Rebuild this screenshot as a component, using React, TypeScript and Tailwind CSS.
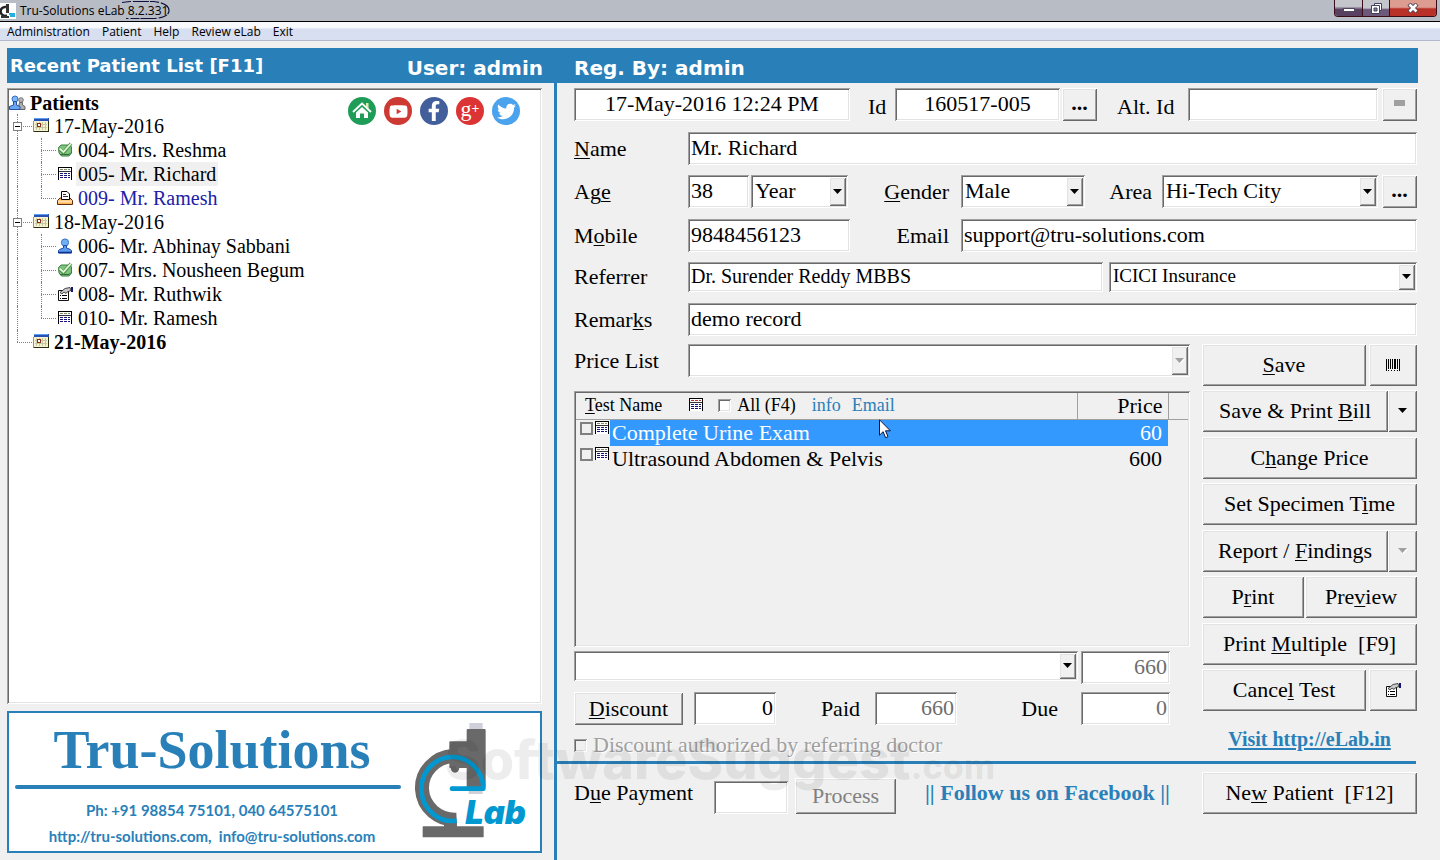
// ============================================
// eLab — Patient registration screen
// ============================================

import React from "react";
import clsx from "clsx";
import { FaFacebookF, FaTwitter, FaYoutube } from "react-icons/fa";

const SUNKEN =
  "shadow-[inset_1px_1px_0_#a0a0a0,inset_-1px_-1px_0_#ffffff,inset_2px_2px_0_#696969,inset_-2px_-2px_0_#e3e3e3]";
const RAISED =
  "shadow-[inset_1px_1px_0_#ffffff,inset_-1px_-1px_0_#696969,inset_2px_2px_0_#e3e3e3,inset_-2px_-2px_0_#a0a0a0]";

// Underlines the letter that follows "_"
function Mnemonic({ text }: { text: string }) {
  const at = text.indexOf("_");
  if (at < 0) return <>{text}</>;
  return (
    <span className="whitespace-pre">
      {text.slice(0, at)}
      <span className="underline decoration-1 underline-offset-2">{text[at + 1]}</span>
      {text.slice(at + 2)}
    </span>
  );
}

/* ---------- Icons ---------- */

function CalendarIcon() {
  return (
    <svg width="16" height="16" viewBox="0 0 16 16" shapeRendering="crispEdges">
      <rect x="0" y="2" width="15" height="12" fill="#f4f2d0" />
      <path d="M0 3h1v11h-1z" fill="#9a9a5a" />
      <rect x="1" y="0" width="15" height="3" fill="#2a50b8" />
      <rect x="1" y="0" width="14" height="1" fill="#5aa0e8" />
      <path d="M3 4h1v8H3zM6 4h1v8H6zM9 4h1v8H9zM12 4h1v8h-1zM2 6h12v1H2zM2 9h12v1H2z" fill="#c9c9a0" />
      <path d="M4 5h4v4H4z" fill="#8c2a1c" />
      <path d="M5 6h2v2H5z" fill="#fff" />
      <path d="M0 13h15v1H0z" fill="#8d9048" />
      <path d="M1 14h15V3h-1v10H1z" fill="#2c3010" />
    </svg>
  );
}

function CheckIcon() {
  return (
    <svg width="16" height="16" viewBox="0 0 16 16">
      <path d="M1.500 5.500 4 3h9l1.500 2v6L12 14H4.500L2 11z" fill="#7cc47c" stroke="#3d7f45" />
      <path d="M3 12.500h9l2-2" stroke="#2f6a38" fill="none" />
      <path d="m2 6.500 4.500 4L14 1.500" fill="none" stroke="#4c8f4c" strokeWidth="3.400" />
      <path d="m2.500 6.500 4 3.500L14 1.500" fill="none" stroke="#e4f8d8" strokeWidth="1.800" />
    </svg>
  );
}

function SheetIcon({ accent = "#7b8a6a" }: { accent?: string }) {
  return (
    <svg width="16" height="16" viewBox="0 0 16 16" shapeRendering="crispEdges">
      <rect x="1" y="1" width="14" height="13" fill="#fff" />
      <path d="M1 1h14v1H1zM1 1h1v13H1zM14 1h1v13h-1z" fill="#000" />
      <path d="M3 3h3v1H3zM7 3h3v1H7zM11 3h2v1h-2z" fill={accent} />
      <path d="M2 5h12v1H2z" fill="#333" />
      <path
        d="M3 7h3v1H3zM7 7h3v1H7zM11 7h2v1h-2zM3 9h3v1H3zM7 9h3v1H7zM11 9h2v1h-2zM3 11h3v1H3zM7 11h3v1H7zM11 11h2v1h-2z"
        fill="#14147a"
      />
    </svg>
  );
}

function PrinterIcon() {
  return (
    <svg width="16" height="16" viewBox="0 0 16 16">
      <path d="M.5 10.500 3 8h10l2.500 2.500v4H.5z" fill="#ffb65c" stroke="#5c2c10" />
      <path d="M1 10.500h14v2H1z" fill="#ffe0ae" />
      <path d="M4.500 9.500v-8H10l2.500 2.500v5.500z" fill="#fff" stroke="#000" />
      <path d="M6 4.500h3M6 6.500h5" stroke="#333" />
    </svg>
  );
}

function PersonIcon() {
  return (
    <svg width="16" height="16" viewBox="0 0 16 16">
      <circle cx="8" cy="4.500" r="3.600" fill="#6fb0f4" stroke="#3a6fc0" />
      <path d="M6.500 7.500h3V10l4 1.500 1 1v2.500h-13v-2.500l1-1 4-1.500z" fill="#5c9cec" stroke="#1c48a8" />
      <path d="M1.500 14.500h13" stroke="#0f2f90" strokeWidth="1.500" />
    </svg>
  );
}

function PeopleIcon() {
  return (
    <svg width="17" height="16" viewBox="0 0 17 16">
      <circle cx="12" cy="5" r="2.300" fill="#b8b8b8" stroke="#777" />
      <path d="M10.500 7.500h3v2.500l2.500 1.500v3H9z" fill="#b0b0b0" stroke="#666" />
      <circle cx="6" cy="4" r="3" fill="#7db8f4" stroke="#3a6fc0" />
      <path d="M4.500 6.500h3V10l3.500 1.500v3H.5v-3L4.500 10z" fill="#6aa6ee" stroke="#2450a8" />
    </svg>
  );
}

function PropertiesIcon() {
  return (
    <svg width="17" height="16" viewBox="0 0 17 16">
      <path d="M1.500 4.500h10v10h-10z" fill="#fff" stroke="#111" />
      <path d="M3 9.500h1M5 9.500h5M3 12.500h1M5 12.500h5" stroke="#000" />
      <path d="m3 6.500 5-4 5-1 1 3-4 1.500-1 1.500-2-1.500-2 2z" fill="#c8c8c8" stroke="#222" strokeWidth=".8" />
      <path d="M14 1h2v5h-2z" fill="#14147a" />
    </svg>
  );
}

function BarcodeIcon() {
  return (
    <svg width="14" height="12" viewBox="0 0 14 12" shapeRendering="crispEdges">
      <path
        d="M0 0h1v12H0zM2 0h1v10H2zM4 0h1v10H4zM6 0h1v10H6zM8 0h2v10H8zM11 0h1v10h-1zM13 0h1v12h-1zM2 11h1v1H2zM5 11h1v1H5zM8 11h1v1H8zM11 11h1v1h-1z"
        fill="#000"
      />
    </svg>
  );
}

function Arrow({ disabled }: { disabled?: boolean }) {
  return (
    <svg width="10" height="6" viewBox="0 0 10 6">
      {disabled && <path d="M1 1h9L5.500 6z" fill="#fff" />}
      <path d="M0 0h9L4.500 5z" fill={disabled ? "#a0a0a0" : "#000"} />
    </svg>
  );
}

function HouseIcon() {
  return (
    <svg width="22" height="22" viewBox="0 0 22 22">
      <path d="M15 3h2.500v6L15 6.500z" fill="#d8f0a8" />
      <path d="m2 12 9-8.500 9 8.500" fill="none" stroke="#fff" strokeWidth="1.800" />
      <path d="M5 12.500 11 7l6 5.500V18h-4v-4.500H9V18H5z" fill="#fff" />
    </svg>
  );
}

function MicroscopeLogo() {
  return (
    <svg width="114" height="116" viewBox="40 68 342 348" className="shrink-0">
      <rect x="206" y="71" width="40" height="24" fill="#d0d0da" />
      <rect x="204" y="262" width="42" height="22" fill="#d0d0da" />
      <rect x="198" y="89" width="57" height="176" rx="3" fill="#696969" />
      <rect x="146" y="126" width="60" height="80" rx="3" fill="#696969" />
      <path d="M148 200h34l-6 6q-2 14-13 14t-13-14z" fill="#696969" />
      <path d="M158 170A99 95.500 0 0 0 168 361" fill="none" stroke="#696969" strokeWidth="42" />
      <path d="M130 370h38v14h-38z" fill="#696969" />
      <rect x="66" y="381" width="183" height="33" rx="2" fill="#696969" />
      <path d="M154 268H248A93 96 0 1 0 168 364" fill="none" stroke="#0098d0" strokeWidth="14" strokeLinejoin="round" />
      <circle cx="154" cy="268" r="7" fill="#0098d0" />
      <text x="194" y="373" fontFamily="Inter, sans-serif" fontWeight="900" fontStyle="italic" fontSize="98" fill="#0098d0">
        Lab
      </text>
    </svg>
  );
}

/* ---------- Controls ---------- */

interface FieldProps {
  id: string;
  value?: string;
  className?: string;
  disabled?: boolean;
  label?: string;
}

function TextField({ id, value = "", className, disabled, label }: FieldProps) {
  return (
    <input
      id={id}
      type="text"
      defaultValue={value}
      disabled={disabled}
      aria-label={label}
      className={clsx("min-w-0 bg-white px-[3px] pb-0.5 outline-none", SUNKEN, disabled && "text-[#6d6d6d]", className)}
    />
  );
}

interface SelectFieldProps extends FieldProps {
  options: string[];
}

function SelectField({ id, options, className, disabled, label }: SelectFieldProps) {
  return (
    <div className={clsx("relative flex min-w-0 bg-white", SUNKEN, className)}>
      <select
        id={id}
        disabled={disabled}
        aria-label={label}
        className="w-full appearance-none bg-transparent pb-0.5 pl-1 pr-5 text-black outline-none"
      >
        {options.map((option) => (
          <option key={option}>{option}</option>
        ))}
      </select>
      <span
        className={clsx(
          "pointer-events-none absolute inset-y-0.5 right-0.5 flex w-[17px] items-center justify-center bg-[#f0f0f0]",
          RAISED
        )}
      >
        <Arrow disabled={disabled} />
      </span>
    </div>
  );
}

interface PushButtonProps {
  text?: string;
  label?: string;
  className?: string;
  disabled?: boolean;
  children?: React.ReactNode;
}

function PushButton({ text, label, className, disabled, children }: PushButtonProps) {
  return (
    <button
      type="button"
      disabled={disabled}
      aria-label={label}
      className={clsx(
        "flex items-center justify-center bg-[#f0f0f0]",
        RAISED,
        disabled && "text-[#808080]",
        className
      )}
    >
      {text ? <Mnemonic text={text} /> : children}
    </button>
  );
}

function Label({ htmlFor, text, className }: { htmlFor: string; text: string; className?: string }) {
  return (
    <label htmlFor={htmlFor} className={clsx("shrink-0 whitespace-nowrap", className)}>
      <Mnemonic text={text} />
    </label>
  );
}

/* ---------- Patient tree ---------- */

type Guide = "line" | "branch" | "last" | "node";

interface TreeRow {
  guides: Guide[];
  icon: React.ReactNode;
  text: string;
  className?: string;
}

const treeRows: TreeRow[] = [
  { guides: ["node"], icon: <CalendarIcon />, text: "17-May-2016" },
  { guides: ["line", "branch"], icon: <CheckIcon />, text: "004- Mrs. Reshma" },
  { guides: ["line", "branch"], icon: <SheetIcon />, text: "005- Mr. Richard", className: "bg-[#f0f0f0]" },
  { guides: ["line", "last"], icon: <PrinterIcon />, text: "009- Mr. Ramesh", className: "text-[#2020a8]" },
  { guides: ["node"], icon: <CalendarIcon />, text: "18-May-2016" },
  { guides: ["line", "branch"], icon: <PersonIcon />, text: "006- Mr. Abhinay Sabbani" },
  { guides: ["line", "branch"], icon: <CheckIcon />, text: "007- Mrs. Nousheen Begum" },
  { guides: ["line", "branch"], icon: <PropertiesIcon />, text: "008- Mr. Ruthwik" },
  { guides: ["line", "last"], icon: <SheetIcon />, text: "010- Mr. Ramesh" },
  { guides: ["last"], icon: <CalendarIcon />, text: "21-May-2016", className: "font-bold" },
];

function TreeGuide({ kind }: { kind: Guide }) {
  return (
    <span className="relative h-6 w-6 shrink-0">
      <span
        className={clsx(
          "absolute left-2 top-0 border-l border-dotted border-[#808080]",
          kind === "last" ? "h-3" : "h-6"
        )}
      />
      {kind !== "line" && (
        <span className="absolute left-2 top-3 w-[15px] border-t border-dotted border-[#808080]" />
      )}
      {kind === "node" && (
        <span className="absolute left-1 top-2 flex h-[9px] w-[9px] items-center justify-center border border-[#808080] bg-white">
          <span className="h-px w-[5px] bg-black" />
        </span>
      )}
    </span>
  );
}

function PatientTree() {
  return (
    <div className="pt-px text-[20px] leading-6">
      <div className="flex h-[23px] items-center gap-1 font-bold">
        <PeopleIcon />
        Patients
      </div>
      <ul>
        {treeRows.map((row) => (
          <li key={row.text} className="flex h-6 items-center">
            {row.guides.map((kind, i) => (
              <TreeGuide key={i} kind={kind} />
            ))}
            <span className="flex w-[19px] shrink-0">{row.icon}</span>
            <span className={clsx("whitespace-nowrap px-0.5", row.className)}>{row.text}</span>
          </li>
        ))}
      </ul>
    </div>
  );
}

const socialLinks = [
  { name: "Home", color: "bg-[#1f9d58]", icon: <HouseIcon /> },
  { name: "YouTube", color: "bg-[#cc3a33]", icon: <FaYoutube size={19} /> },
  { name: "Facebook", color: "bg-[#425f9c]", icon: <FaFacebookF size={20} /> },
  {
    name: "Google Plus",
    color: "bg-[#dc3434]",
    icon: (
      <span className="flex items-center pb-1">
        g<span className="text-[14px] font-bold">+</span>
      </span>
    ),
  },
  { name: "Twitter", color: "bg-[#4aa3ec]", icon: <FaTwitter size={19} /> },
];

function BrandPanel() {
  return (
    <div className="mt-[7px] flex items-start justify-between border-2 border-[#2980b9] bg-white pb-0.5 pl-1.5 pr-3 pt-[9px] text-[#2980b9]">
      <div className="flex w-[386px] flex-col items-center">
        <div className="pl-2 text-[54px] font-bold leading-[56px]">Tru-Solutions</div>
        <div className="mt-[7px] h-1 w-full rounded-full bg-[#2980b9]" />
        <div className="mt-2 whitespace-pre pl-2 text-center text-[15px] font-bold leading-[26px] [font-family:Lato,sans-serif]">
          <div>Ph: +91 98854 75101, 040 64575101</div>
          <div>http://tru-solutions.com,  info@tru-solutions.com</div>
        </div>
      </div>
      <MicroscopeLogo />
    </div>
  );
}

/* ---------- Registration form ---------- */

function PatientFields() {
  return (
    <div className="flex flex-col gap-2.5">
      <div className="flex flex-col gap-[11px]">
        <div className="flex h-[33px] items-center">
          <TextField id="regDate" label="Date" value="17-May-2016 12:24 PM" className="h-full w-[276px] text-center" />
          <Label htmlFor="regId" text="Id" className="w-[45px] pl-[18px] pt-1" />
          <TextField id="regId" value="160517-005" className="h-full w-[165px] text-center" />
          <PushButton label="Find id" className="ml-0.5 h-full w-[35px] pb-1 font-bold">
            ...
          </PushButton>
          <Label htmlFor="altId" text="Alt. Id" className="w-[91px] pl-5 pt-1" />
          <TextField id="altId" className="h-full flex-1" />
          <PushButton label="Clear alternate id" disabled className="ml-1 h-full w-[35px] pb-1">
            <span className="h-1.5 w-[11px] bg-[#a0a0a0]" />
          </PushButton>
        </div>

        <div className="flex h-[33px] items-center">
          <Label htmlFor="name" text="_Name" className="w-[114px]" />
          <TextField id="name" value="Mr. Richard" className="h-full flex-1" />
        </div>
      </div>

      <div className="flex flex-col gap-[11px]">
        <div className="flex h-[33px] items-center">
          <Label htmlFor="age" text="Ag_e" className="w-[114px]" />
          <TextField id="age" value="38" className="h-full w-[61px]" />
          <SelectField id="ageUnit" label="Age unit" options={["Year", "Month", "Day"]} className="ml-0.5 h-full w-[97px]" />
          <Label htmlFor="gender" text="_Gender" className="w-[113px] pr-3 text-right" />
          <SelectField id="gender" options={["Male", "Female"]} className="h-full w-[124px]" />
          <Label htmlFor="area" text="Area" className="w-[77px] pr-2.5 text-right" />
          <SelectField id="area" options={["Hi-Tech City"]} className="h-full flex-1" />
          <PushButton label="Find area" className="ml-1 h-full w-[35px] pb-1 font-bold">
            ...
          </PushButton>
        </div>

        <div className="flex h-[33px] items-center">
          <Label htmlFor="mobile" text="M_obile" className="w-[114px]" />
          <TextField id="mobile" value="9848456123" className="h-full w-[162px]" />
          <Label htmlFor="email" text="Email" className="w-[111px] pr-3 text-right" />
          <TextField id="email" value="support@tru-solutions.com" className="h-full flex-1" />
        </div>
      </div>

      <div className="flex flex-col gap-[11px]">
        <div className="flex h-[30px] items-center">
          <Label htmlFor="referrer" text="Referrer" className="w-[114px]" />
          <TextField id="referrer" value="Dr. Surender Reddy MBBS" className="h-full flex-1 text-[20px]" />
          <SelectField
            id="insurance"
            label="Insurance"
            options={["ICICI Insurance"]}
            className="ml-1.5 h-full w-[308px] text-[19px]"
          />
        </div>

        <div className="flex h-[33px] items-center">
          <Label htmlFor="remarks" text="Remar_ks" className="w-[114px]" />
          <TextField id="remarks" value="demo record" className="h-full flex-1" />
        </div>
      </div>
    </div>
  );
}

const tests = [
  { name: "Complete Urine Exam", price: 60, selected: true },
  { name: "Ultrasound Abdomen & Pelvis", price: 600, selected: false },
];

function TestTable() {
  return (
    <div className={clsx("relative mt-3.5 h-[256px] p-0.5", SUNKEN)}>
      <table className="w-full table-fixed border-collapse">
        <colgroup>
          <col className="w-[34px]" />
          <col />
          <col className="w-[91px]" />
          <col className="w-5" />
        </colgroup>
        <thead>
          <tr className="h-[26px] border-b border-[#a0a0a0]">
            <th colSpan={2} className="border-r border-[#a0a0a0] p-0 font-normal">
              <div className="flex items-center pb-0.5 pl-[9px] text-[18px] leading-6">
                <Mnemonic text="_Test Name" />
                <span className="ml-[26px]">
                  <SheetIcon accent="#c03030" />
                </span>
                <label className="ml-3.5 flex items-center gap-1.5">
                  <input type="checkbox" className={clsx("h-[13px] w-[13px] appearance-none bg-white", SUNKEN)} />
                  All (F4)
                </label>
                <a href="#info" className="ml-4 text-[#2980b9]">
                  info
                </a>
                <a href="#email" className="ml-[11px] text-[#2980b9]">
                  Email
                </a>
              </div>
            </th>
            <th className="border-r border-[#a0a0a0] p-0 pr-[5px] text-right font-normal leading-[26px]">Price</th>
            <th className="p-0" />
          </tr>
        </thead>
        <tbody>
          {tests.map((test) => (
            <tr key={test.name} className="h-[26px] leading-[26px]">
              <td className="p-0 align-top">
                <div className="flex items-start gap-px pl-1">
                  <input
                    type="checkbox"
                    aria-label={test.name}
                    className="mt-0.5 h-[13px] w-[13px] shrink-0 appearance-none border-2 border-[#808080]"
                  />
                  <SheetIcon />
                </div>
              </td>
              <td className={clsx("p-0 pl-0.5", test.selected && "bg-[#3399ff] text-white")}>{test.name}</td>
              <td className={clsx("p-0 pr-1.5 text-right", test.selected && "bg-[#3399ff] text-white")}>
                {test.price}
              </td>
              <td className="p-0" />
            </tr>
          ))}
        </tbody>
      </table>

      {/* Mouse pointer */}
      <svg width="12" height="20" viewBox="0 0 12 20" className="absolute left-[305px] top-[28px]">
        <path d="M.5.8v15.400l3.600-3.500 2.500 6 2.400-1-2.500-5.900h4.900z" fill="#fff" stroke="#101038" />
      </svg>
    </div>
  );
}

function BillingFields() {
  return (
    <>
      <div className="mt-1 flex h-[33px] items-start pr-5">
        <SelectField id="addTest" label="Add test" options={[""]} className="h-[30px] flex-1" />
        <TextField id="total" label="Total" value="660" disabled className="ml-[3px] h-full w-[89px] text-right" />
      </div>
      <div className="mt-2 flex h-[33px] items-center pr-5">
        <PushButton text="_Discount" className="h-full w-[109px]" />
        <TextField id="discount" label="Discount" value="0" className="ml-[11px] h-full w-[82px] text-right" />
        <Label htmlFor="paid" text="Paid" className="w-[99px] pr-[15px] text-right" />
        <TextField id="paid" value="660" disabled className="h-full w-[82px] text-right" />
        <Label htmlFor="due" text="Due" className="flex-1 pr-[23px] text-right" />
        <TextField id="due" value="0" disabled className="h-full w-[89px] text-right" />
      </div>
      <label className="mt-2 flex h-6 items-center gap-1.5 text-[#a0a0a0] [text-shadow:1px_1px_0_#ffffff]">
        <input type="checkbox" disabled className={clsx("h-[13px] w-[13px] appearance-none", SUNKEN)} />
        Discount authorized by referring doctor
      </label>
    </>
  );
}

function ActionButtons() {
  return (
    <div className="flex w-[215px] shrink-0 flex-col">
      <div className="flex min-h-[367px] flex-col justify-between">
        <div className="flex h-[42px] gap-[3px]">
          <PushButton text="_Save" className="flex-1" />
          <PushButton label="Barcode" className="w-12">
            <BarcodeIcon />
          </PushButton>
        </div>
        <div className="flex h-[42px]">
          <PushButton text="Save & Print _Bill" className="flex-1" />
          <PushButton label="Bill options" className="w-[29px]">
            <Arrow />
          </PushButton>
        </div>
        <PushButton text="C_hange Price" className="h-[42px]" />
        <PushButton text="Set Specimen T_ime" className="h-[42px]" />
        <div className="flex h-[42px]">
          <PushButton text="Report / _Findings" className="flex-1" />
          <PushButton label="Report options" disabled className="w-[29px]">
            <Arrow disabled />
          </PushButton>
        </div>
        <div className="flex h-[42px] gap-px">
          <PushButton text="P_rint" className="w-[102px]" />
          <PushButton text="Pre_view" className="flex-1" />
        </div>
        <PushButton text="Print _Multiple  [F9]" className="h-[42px]" />
        <div className="flex h-[42px] gap-[3px]">
          <PushButton text="Cance_l Test" className="flex-1" />
          <PushButton label="Test properties" className="w-12">
            <PropertiesIcon />
          </PushButton>
        </div>
      </div>
      <a
        href="http://eLab.in"
        className="mt-4 text-center text-[20px] font-bold leading-6 text-[#2980b9] underline decoration-2 underline-offset-2"
      >
        Visit http://eLab.in
      </a>
    </div>
  );
}

/* ---------- Window ---------- */

function TitleBar() {
  return (
    <div className="relative flex h-[22px] items-start justify-between border-b border-black bg-[#b8bcc4] pr-[3px]">
      <div className="flex h-[21px] items-center gap-1 text-[12px] [font-family:'Open_Sans',sans-serif]">
        <span className="flex h-4 w-4 items-center justify-center bg-white">
          <svg width="16" height="16" viewBox="0 0 16 16">
            <path d="M6 4a4.500 4.500 0 1 0 1 8.500" fill="none" stroke="#222" strokeWidth="2.500" />
            <path d="M6 1h3v9H6zM1 13h8v2H1z" fill="#333" />
            <path d="M9 11h6M10 13h5" stroke="#22b0e0" strokeWidth="2" />
          </svg>
        </span>
        Tru-Solutions eLab 8.2.331
      </div>
      <svg width="56" height="20" viewBox="0 0 56 20" className="absolute left-[118px] top-0">
        <path d="M4 2.500 12 1.500h24q15 2 15 9t-15 8H8" fill="none" stroke="#10103c" strokeWidth="1.200" strokeDasharray="9 2 16 1" />
      </svg>
      <div className="flex h-[17px] overflow-hidden rounded-b border border-t-0 border-[#3a0c18]">
        <button
          type="button"
          aria-label="Minimize"
          className="flex w-7 items-center justify-center border-r border-[#3a0c18] bg-linear-to-b from-[#c4c6cc] from-40% to-[#584060] to-60%"
        >
          <span className="mt-1 h-1 w-3 border border-[#504860] bg-white" />
        </button>
        <button
          type="button"
          aria-label="Restore"
          className="flex w-[27px] items-center justify-center border-r border-[#3a0c18] bg-linear-to-b from-[#c4c6cc] from-50% to-[#6c5878] to-60%"
        >
          <svg width="13" height="13" viewBox="0 0 13 13">
            <path d="M4.500 1.500h7v7h-7z" fill="#fff" stroke="#404060" />
            <path d="M1.500 3.500h8v8h-8z" fill="#fff" stroke="#404060" />
            <path d="M4 6h3v3H4z" fill="#8088a0" stroke="#404060" />
          </svg>
        </button>
        <button
          type="button"
          aria-label="Close"
          className="flex w-[46px] items-center justify-center bg-linear-to-b from-[#dc9c90] from-45% to-[#b83028] to-55%"
        >
          <svg width="12" height="10" viewBox="0 0 12 10">
            <path d="m2 1 8 8M10 1 2 9" stroke="#504050" strokeWidth="4.400" />
            <path d="m2.500 1.500 7 7M9.500 1.500l-7 7" stroke="#fff" strokeWidth="2.600" />
          </svg>
        </button>
      </div>
    </div>
  );
}

const menuItems = ["Administration", "Patient", "Help", "Review eLab", "Exit"];

export default function App() {
  return (
    <div className="relative flex min-h-screen flex-col overflow-hidden bg-[#f0f0f0] text-[22px] leading-7 text-black [font-family:'Liberation_Serif',serif]">
      <TitleBar />

      <nav className="flex h-[19px] items-center gap-3 border-b border-[#b0b8cc] bg-linear-to-b from-[#f8fafd] from-30% to-[#d8dff0] to-40% pl-[7px] pt-0.5 text-[12px] leading-4 [font-family:'Open_Sans',sans-serif]">
        {menuItems.map((item) => (
          <button key={item} type="button">
            {item}
          </button>
        ))}
      </nav>

      <div className="flex flex-1 flex-col pl-[7px] pr-[22px] pt-[7px]">
        <header className="flex h-[35px] items-center bg-[#2980b9] font-bold text-white [font-family:'DejaVu_Sans',sans-serif]">
          <div className="flex w-[536px] shrink-0 items-center justify-between pl-[3px]">
            <h1 className="text-[18px]">Recent Patient List [F11]</h1>
            <span className="pt-1 text-[20px]">User: admin</span>
          </div>
          <span className="pl-[31px] pt-1 text-[20px]">Reg. By: admin</span>
        </header>

        <div className="flex flex-1">
          {/* Left side: recent patients */}
          <aside className="mr-3 flex w-[535px] shrink-0 flex-col pb-[7px] pt-[5px]">
            <div className={clsx("flex flex-1 justify-between bg-white p-0.5", SUNKEN)}>
              <PatientTree />
              <div className="flex gap-2 pr-5 pt-[7px]">
                {socialLinks.map((link) => (
                  <a
                    key={link.name}
                    href="#social"
                    aria-label={link.name}
                    className={clsx("flex h-7 w-7 items-center justify-center rounded-full text-white", link.color)}
                  >
                    {link.icon}
                  </a>
                ))}
              </div>
            </div>
            <BrandPanel />
          </aside>

          {/* Right side: registration */}
          <main className="min-w-0 flex-1 border-l-[3px] border-[#2980b9]">
            <div className="pl-[17px] pr-px pt-[5px]">
              <PatientFields />
            </div>
            <div className="mt-2 flex gap-3 pl-[17px] pr-px">
              <div className="min-w-0 flex-1">
                <div className="flex h-[33px] items-center">
                  <Label htmlFor="priceList" text="Price List" className="w-[114px]" />
                  <SelectField id="priceList" options={[""]} disabled className="h-full flex-1" />
                </div>
                <TestTable />
                <BillingFields />
              </div>
              <ActionButtons />
            </div>

            <hr className="mr-0.5 mt-1 border-t-[3px] border-[#2980b9]" />

            <div className="mt-2 flex h-[42px] items-end pl-[17px] pr-px">
              <Label htmlFor="duePayment" text="D_ue Payment" className="w-[140px] self-center" />
              <TextField id="duePayment" className="h-[33px] w-[74px]" />
              <PushButton text="Process" disabled className="ml-[7px] h-9 w-[101px]" />
              <a href="#facebook" className="ml-[29px] self-center whitespace-nowrap font-bold text-[#2980b9]">
                || Follow us on Facebook ||
              </a>
              <PushButton text="Ne_w Patient  [F12]" className="ml-auto h-full w-[215px]" />
            </div>
          </main>
        </div>
      </div>

      {/* Watermark */}
      <div className="pointer-events-none absolute bottom-[61px] left-[445px] whitespace-nowrap text-[54px] font-extrabold leading-[64px] text-black/[0.07] [font-family:Inter,sans-serif]">
        SoftwareSuggest<span className="text-[34px]">.com</span>
      </div>
    </div>
  );
}
